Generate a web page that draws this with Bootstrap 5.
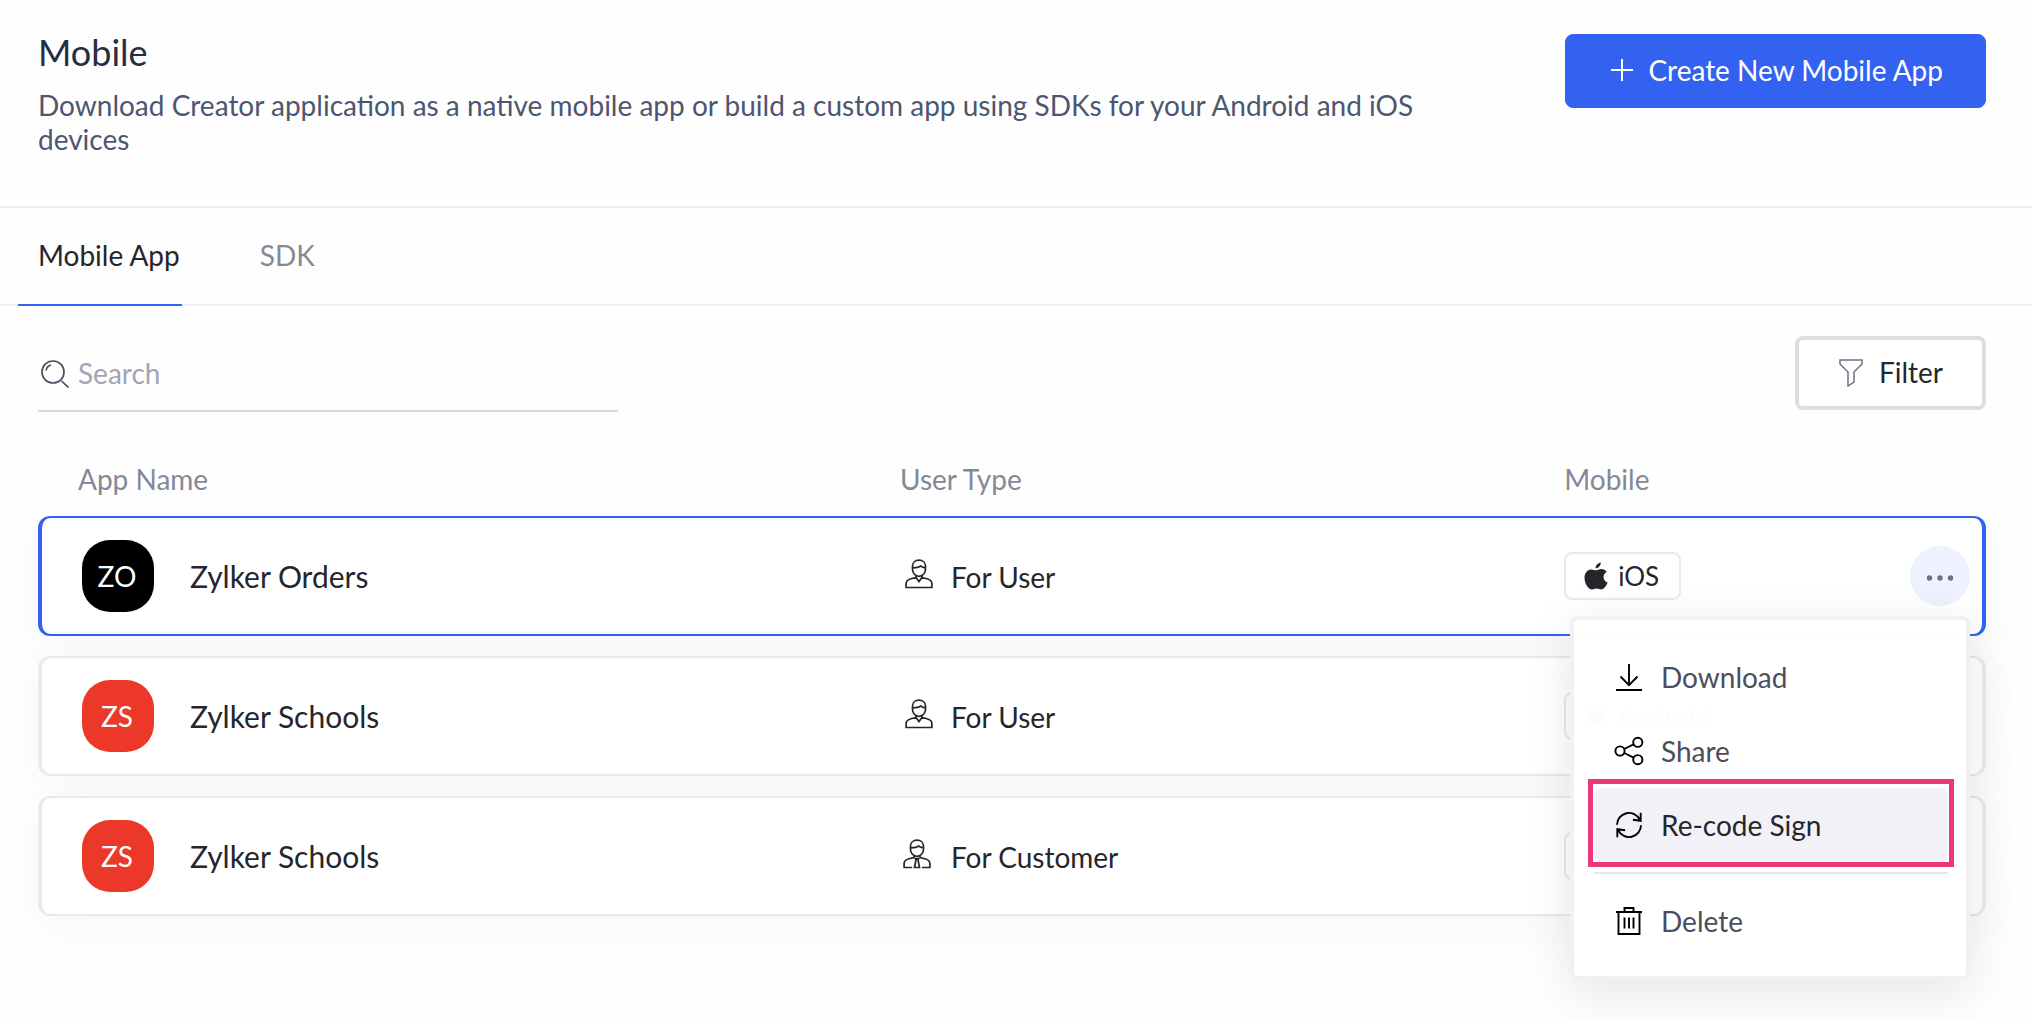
<!DOCTYPE html>
<html lang="en">
<head>
<meta charset="utf-8">
<meta name="viewport" content="width=device-width, initial-scale=1">
<title>Mobile</title>
<link href="https://cdn.jsdelivr.net/npm/bootstrap@5.3.0/dist/css/bootstrap.min.css" rel="stylesheet">
<style>
  body { font-family: Lato, "Open Sans", sans-serif; font-size: 28px; line-height: 34px; color: #25262b; background: #fefefe; }
  svg { flex: none; }
  .ico-line { fill: none; stroke: currentColor; }
  .ico-solid { fill: currentColor; stroke: none; }
  .page-head { padding: 30px 46px 50px 38px; gap: 80px; border-bottom: 2px solid #eeeff5; }
  .page-head h1 { font-size: 36px; line-height: 44px; font-weight: 400; color: #272e41; margin-bottom: 14px; }
  .page-head p { color: #4c5670; }
  .btn { font-size: 28px; line-height: 34px; border-radius: 8px; }
  .btn-create { --bs-btn-bg: #3362f0; --bs-btn-border-color: #3362f0; --bs-btn-color: #fff; height: 74px; padding: 0 42px 2px 44px; margin-top: 4px; gap: 14px; }
  .app-tabs { padding-left: 18px; gap: 58px; border-bottom: 2px solid #edf0f6; }
  .app-tabs .nav-link { padding: 30px 2px 32px 20px; margin-bottom: -2px; border-bottom: 2px solid transparent; color: #858997; }
  .app-tabs .nav-link.active { color: #25262b; border-color: #3362f0; }
  .app-main { padding: 30px 46px 60px 38px; }
  .search-box { width: 580px; height: 76px; border-bottom: 2px solid #d9d9e3; gap: 9px; padding-left: 3px; }
  .search-box svg { color: #4d5060; margin-top: 2px; }
  .search-box input { font-size: 28px; line-height: 34px; color: #25262b; }
  .search-box input::placeholder { color: #a3a4b8; opacity: 1; }
  .btn-filter { --bs-btn-bg: #fff; --bs-btn-color: #25262b; border: 4px solid #dcdee2; height: 74px; padding: 0 39px 2px 40px; gap: 16px; }
  .btn-filter svg { color: #6d7085; margin-top: 2px; }
  .app-table { table-layout: fixed; border-collapse: separate; border-spacing: 0 20px; margin-top: 32px; }
  .app-table th { height: 32px; padding: 0 0 2px; font-weight: 400; line-height: 30px; color: #858997; }
  .app-table th:first-child { padding-left: 40px; }
  .app-table tbody tr { border-radius: 12px; box-shadow: 0 10px 50px rgba(0,0,0,.03); }
  .app-table td { height: 120px; padding: 0; background: #fff; border: 0 solid #e8e8f0; border-width: 2px 0; vertical-align: middle; }
  .app-table td:first-child { border-left: 4px solid #e8eaf4; border-radius: 12px 0 0 12px; padding-left: 40px; }
  .app-table td:last-child { border-right: 4px solid #e8eaf4; border-radius: 0 12px 12px 0; padding-right: 12px; }
  .app-table tr.picked td { border-color: #3362f0; }
  .app-logo { width: 72px; height: 72px; border-radius: 28px; background: #eb3829; color: #fff; font-size: 28px; padding-right: 2px; }
  .app-logo.dark { background: #000; }
  .app-name { font-size: 30px; margin-left: 36px; }
  .user-kind { gap: 18px; padding: 2px 0 0 5px; }
  .user-kind.guest { gap: 20px; padding-left: 3px; }
  .user-kind svg { margin-bottom: 6px; }
  .os-tag { height: 48px; border: 2px solid #e8e8f0; border-radius: 8px; padding: 0 20px 0 18px; gap: 10px; font-size: 26px; line-height: 32px; background: #fff; }
  .btn-more { width: 60px; height: 60px; padding: 0; border: 0; border-radius: 50%; --bs-btn-bg: #edf2fe; --bs-btn-color: #6d7085; }
  .app-menu.dropdown-menu { top: 70px; right: 0; width: 400px; padding: 20px 18px 18px 20px; border: 4px solid #f1f1f1; border-radius: 8px; background: rgba(255,255,255,.99); box-shadow: 0 12px 50px rgba(0,0,0,.1); }
  .app-menu .dropdown-item { height: 74px; padding: 0 20px; gap: 17px; font-size: 28px; color: #4c4e5c; border-radius: 8px; }
  .app-menu .dropdown-item svg { color: #000; }
  .app-menu .dropdown-item.chosen { background: #f2f1f7; color: #25262b; position: relative; }
  .app-menu .dropdown-item.chosen::after { content: ""; position: absolute; inset: -9px -6px -5px; border: 5px solid #ec3878; }
  .app-menu .dropdown-divider { margin: 10px 0; border-top: 2px solid #e5e5e8; opacity: 1; }
</style>
</head>
<body class="min-vh-100">
<svg class="d-none" aria-hidden="true">
  <symbol id="user" viewBox="0 0 28 30"><path d="M7.500 7v3.500c0 3.500 3 6.800 6.500 6.800s6.500-3.300 6.500-6.800V7c0-3.500-2.800-5.800-6.500-5.800S7.500 3.500 7.500 7zM7.800 8.800c3.200 0 6-.3 8-1.800 1 1.300 2.500 1.800 4.500 1.800M11 16.500v2l-5 1.300c-3 .8-4.900 2.200-4.900 5V28.500h25.800V24.800c0-2.800-1.900-4.200-4.900-5l-5-1.300v-2M11 18.500l3 4 3-4" stroke-width="1.700"/></symbol>
  <symbol id="customer" viewBox="0 0 28 30"><path d="M7.500 7v3.500c0 3.500 3 6.800 6.500 6.800s6.500-3.300 6.500-6.800V7c0-3.500-2.800-5.800-6.500-5.800S7.500 3.500 7.500 7zM7.800 8.800c3.200 0 6-.3 8-1.800 1 1.300 2.500 1.800 4.500 1.800M11 16.500v2l-5 1.300c-3 .8-4.900 2.200-4.900 5V28.500h8M17 16.500v2l5 1.300c3 .8 4.900 2.200 4.900 5V28.500h-8M11.500 19.500h5M13 20.500l-1.500 8h5l-1.500-8z" stroke-width="1.700"/></symbol>
</svg>

<header class="page-head d-flex align-items-start">
  <div class="flex-grow-1">
    <h1>Mobile</h1>
    <p class="mb-0">Download Creator application as a native mobile app or build a custom app using SDKs for your Android and iOS devices</p>
  </div>
  <button type="button" class="btn btn-create d-flex align-items-center flex-shrink-0">
    <svg class="ico-line" width="24" height="24" viewBox="0 0 24 24" stroke-width="2"><path d="M12 1v22M1 12h22"/></svg>
    Create New Mobile App
  </button>
</header>

<nav class="nav app-tabs" aria-label="Sections">
  <a class="nav-link active" href="#app" aria-current="page">Mobile App</a>
  <a class="nav-link" href="#sdk">SDK</a>
</nav>

<main class="app-main" id="app">
  <div class="d-flex justify-content-between align-items-start">
    <label class="search-box d-flex align-items-center" for="search">
      <svg class="ico-line" width="28" height="28" viewBox="0 0 28 28" stroke-width="1.700"><circle cx="12" cy="12" r="11"/><path d="M5 10.500C5.500 7.800 7.500 5.600 10 5M20.500 21l7 6.500"/></svg>
      <input id="search" type="search" class="flex-grow-1 border-0 p-0 bg-transparent" placeholder="Search" aria-label="Search">
    </label>
    <button type="button" class="btn btn-filter d-flex align-items-center">
      <svg class="ico-line" width="24" height="28" viewBox="0 0 24 28" stroke-width="1.500"><path d="M1 1h22v4l-8 8v10l-6 4V13L1 5z"/></svg>
      Filter
    </button>
  </div>

  <table class="app-table w-100">
    <colgroup><col style="width:44.25%"><col style="width:34.1%"><col></colgroup>
    <thead><tr><th scope="col">App Name</th><th scope="col">User Type</th><th scope="col">Mobile</th></tr></thead>
    <tbody>
      <tr class="picked">
        <td><div class="d-flex align-items-center"><span class="app-logo dark d-flex align-items-center justify-content-center">ZO</span><span class="app-name">Zylker Orders</span></div></td>
        <td><div class="user-kind d-flex align-items-center"><svg class="ico-line" width="28" height="30"><use href="#user"/></svg>For User</div></td>
        <td><div class="d-flex align-items-center justify-content-between">
          <span class="os-tag d-flex align-items-center"><svg class="ico-solid" width="24" height="28" viewBox="0 0 24 28"><path d="M16.800.5c.2 2.800-2.500 6-5.200 5.800C11.400 3.600 14 .8 16.800.5zM12.200 8.300c1.200 0 2.700-1.300 5.200-1.300 2 0 4 1 5.300 2.800-4.700 2.700-3.900 9 .9 10.800C22.300 23.800 20 27.500 17.300 27.500c-1.800 0-2.500-1-4.700-1s-2.900 1-4.600 1C4.300 27.500.5 21.400.5 15.800.5 10.500 3.800 7.400 7.100 7.400c2.300 0 3.800.9 5.100.9z"/></svg>iOS</span>
          <div class="dropdown">
            <button type="button" class="btn btn-more d-flex align-items-center justify-content-center" aria-label="More actions" aria-expanded="true"><svg class="ico-solid mt-1" width="28" height="8" viewBox="0 0 28 8"><circle cx="3.500" cy="4" r="2.700"/><circle cx="14" cy="4" r="2.700"/><circle cx="24.500" cy="4" r="2.700"/></svg></button>
            <div class="dropdown-menu show app-menu">
              <button type="button" class="dropdown-item d-flex align-items-center"><svg class="ico-line" width="30" height="30" viewBox="0 0 30 30" stroke-width="1.900"><path d="M15 2v21M6.500 14.500l8.500 8.700 8.500-8.700M2 28h26"/></svg>Download</button>
              <button type="button" class="dropdown-item d-flex align-items-center"><svg class="ico-line" width="30" height="30" viewBox="0 0 30 30" stroke-width="1.900"><circle cx="6" cy="15" r="4.600"/><circle cx="23.800" cy="6.300" r="4.600"/><circle cx="23.800" cy="23.700" r="4.600"/><path d="M10.200 13l9.400-4.600M10.200 17l9.400 4.600"/></svg>Share</button>
              <button type="button" class="dropdown-item chosen d-flex align-items-center"><svg class="ico-line" width="30" height="30" viewBox="0 0 30 30" stroke-width="1.900"><path d="M3 14.800A12 12 0 0 1 25.700 9.500M26.700 2.800v8l-7.800-1M27 15.200A12 12 0 0 1 4.300 20.500M3.300 27.200v-8l7.800 1"/></svg>Re-code Sign</button>
              <hr class="dropdown-divider">
              <button type="button" class="dropdown-item d-flex align-items-center"><svg class="ico-line" width="30" height="30" viewBox="0 0 30 30" stroke-width="1.900"><path d="M2 6h26M4.500 6v22h21V6M10.500 6V2h9v4M10.500 11.500v11M15 11.500v11M19.500 11.500v11"/></svg>Delete</button>
            </div>
          </div>
        </div></td>
      </tr>
      <tr>
        <td><div class="d-flex align-items-center"><span class="app-logo d-flex align-items-center justify-content-center">ZS</span><span class="app-name">Zylker Schools</span></div></td>
        <td><div class="user-kind d-flex align-items-center"><svg class="ico-line" width="28" height="30"><use href="#user"/></svg>For User</div></td>
        <td><div class="d-flex"><span class="os-tag d-flex align-items-center"><svg class="ico-solid" width="24" height="28" viewBox="0 0 24 28"><path d="M4 11h16v11H4zM4 10a8 7 0 0 1 16 0z"/></svg>Android</span></div></td>
      </tr>
      <tr>
        <td><div class="d-flex align-items-center"><span class="app-logo d-flex align-items-center justify-content-center">ZS</span><span class="app-name">Zylker Schools</span></div></td>
        <td><div class="user-kind guest d-flex align-items-center"><svg class="ico-line" width="28" height="30"><use href="#customer"/></svg>For Customer</div></td>
        <td><div class="d-flex"><span class="os-tag d-flex align-items-center"><svg class="ico-solid" width="24" height="28" viewBox="0 0 24 28"><path d="M4 11h16v11H4zM4 10a8 7 0 0 1 16 0z"/></svg>Android</span></div></td>
      </tr>
    </tbody>
  </table>
</main>
<script src="https://cdn.jsdelivr.net/npm/bootstrap@5.3.0/dist/js/bootstrap.bundle.min.js"></script>
</body>
</html>
